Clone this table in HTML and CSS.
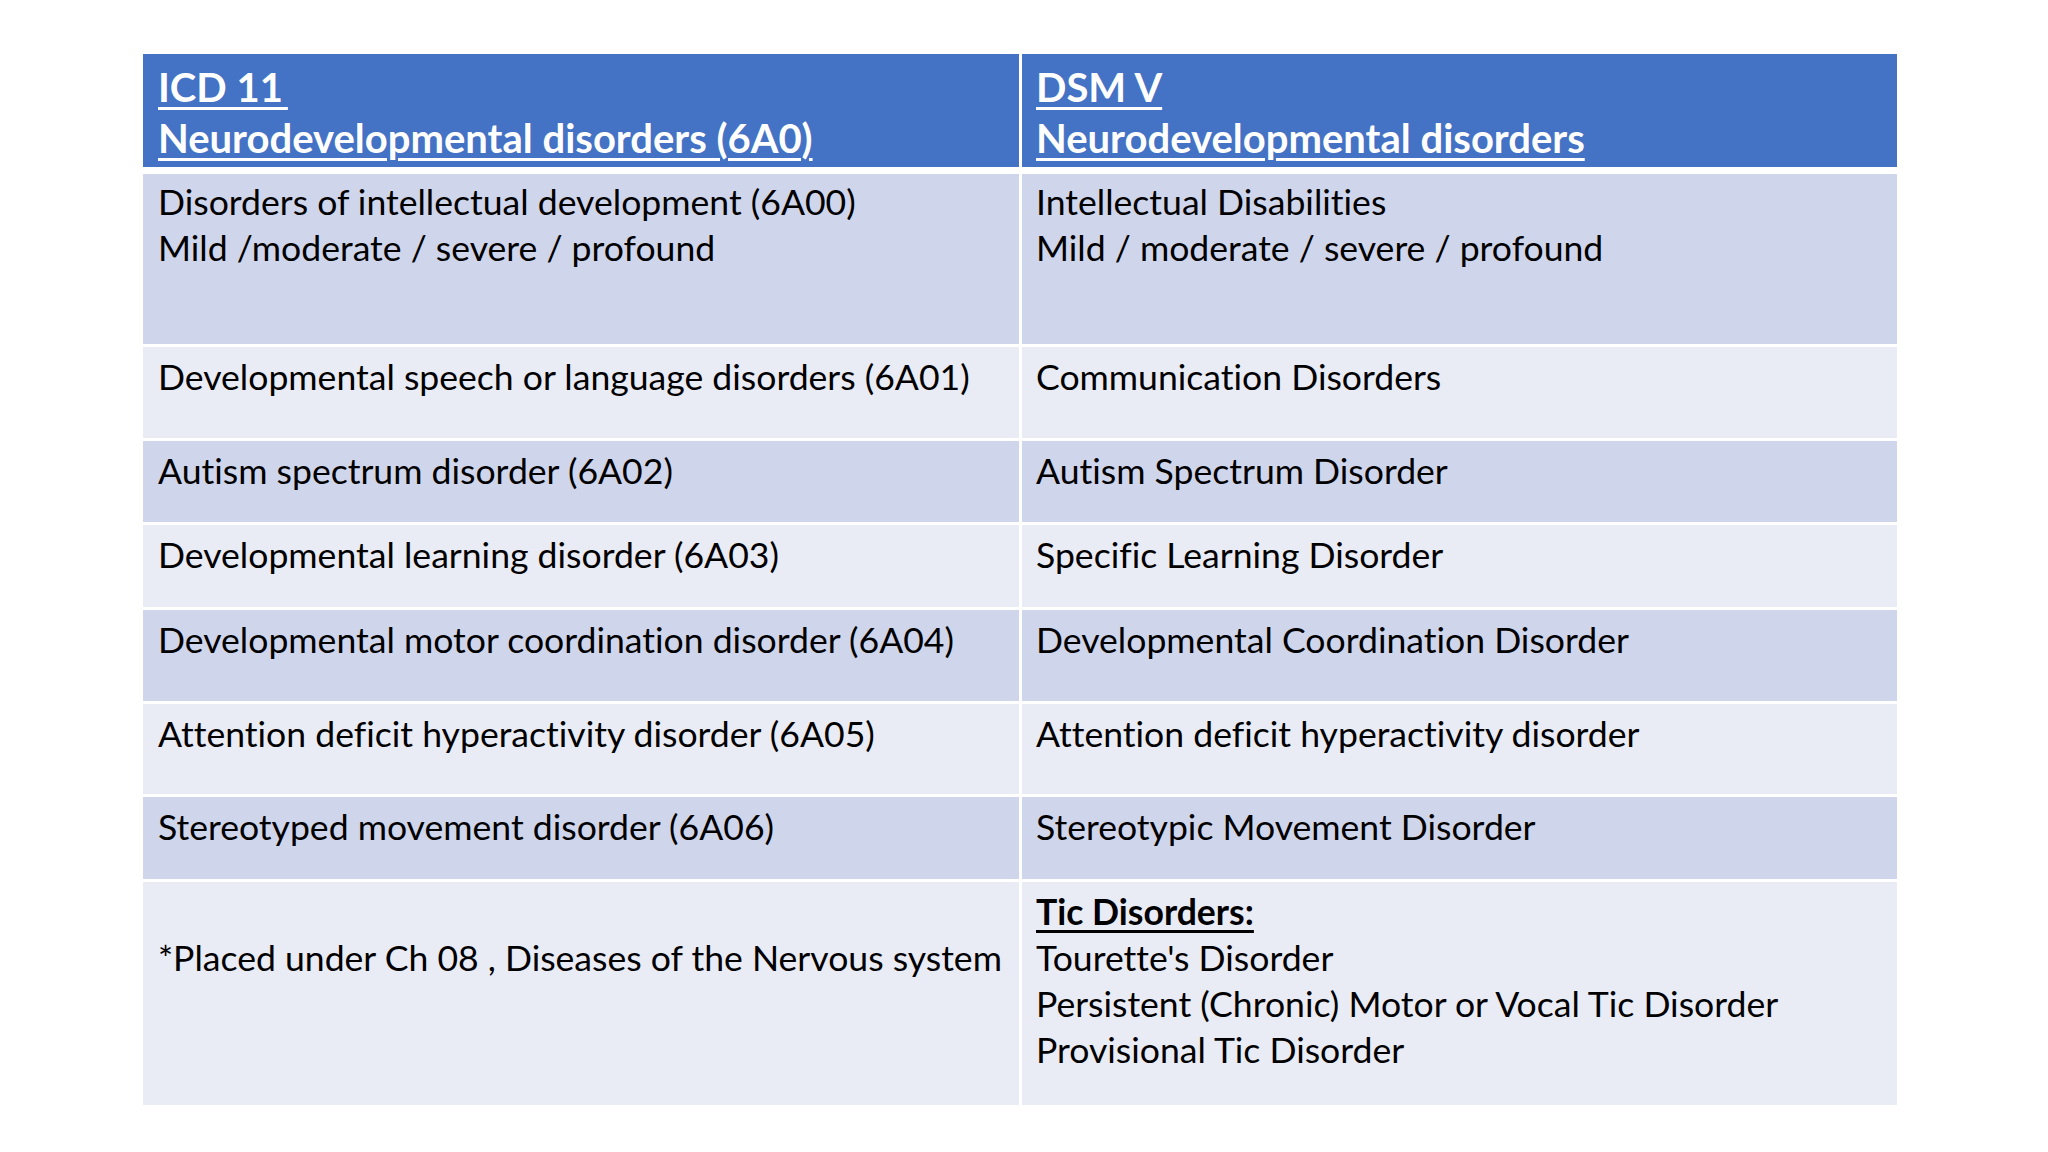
FILE: index.html
```html
<!DOCTYPE html>
<html lang="en">
<head>
<meta charset="utf-8">
<title>ICD 11 vs DSM V</title>
<link rel="stylesheet" href="styles.css">
</head>
<body>
<div class="table">
  <div class="row head">
    <div class="cell"><span class="u">ICD 11&thinsp;</span><br><span class="u">Neurodevelopmental disorders (6A0)</span></div>
    <div class="cell"><span class="u">DSM V</span><br><span class="u">Neurodevelopmental disorders</span></div>
  </div>
  <div class="row odd h170 first">
    <div class="cell">Disorders of intellectual development (6A00)<br>Mild /moderate / severe / profound</div>
    <div class="cell">Intellectual Disabilities<br>Mild / moderate / severe / profound</div>
  </div>
  <div class="row even h91">
    <div class="cell">Developmental speech or language disorders (6A01)</div>
    <div class="cell">Communication Disorders</div>
  </div>
  <div class="row odd h81">
    <div class="cell">Autism spectrum disorder (6A02)</div>
    <div class="cell">Autism Spectrum Disorder</div>
  </div>
  <div class="row even h82">
    <div class="cell">Developmental learning disorder (6A03)</div>
    <div class="cell">Specific Learning Disorder</div>
  </div>
  <div class="row odd h91">
    <div class="cell">Developmental motor coordination disorder (6A04)</div>
    <div class="cell">Developmental Coordination Disorder</div>
  </div>
  <div class="row even h90">
    <div class="cell">Attention deficit hyperactivity disorder (6A05)</div>
    <div class="cell">Attention deficit hyperactivity disorder</div>
  </div>
  <div class="row odd h82">
    <div class="cell">Stereotyped movement disorder (6A06)</div>
    <div class="cell">Stereotypic Movement Disorder</div>
  </div>
  <div class="row even h223">
    <div class="cell second-line">*Placed under Ch 08 , Diseases of the Nervous system</div>
    <div class="cell"><span class="u b">Tic Disorders:</span><br>Tourette's Disorder<br>Persistent (Chronic) Motor or Vocal Tic Disorder<br>Provisional Tic Disorder</div>
  </div>
</div>
</body>
</html>
```

FILE: styles.css
```css
html, body {
  margin: 0;
  padding: 0;
  background: #ffffff;
}

body {
  font-family: "Lato", "Liberation Sans", sans-serif;
  font-variant-ligatures: none;
  color: #000000;
}

.table {
  display: flex;
  flex-direction: column;
  gap: 3px;
  width: 1754px;
  margin: 54px 0 0 143px;
}

.row {
  display: grid;
  grid-template-columns: 876px 875px;
  column-gap: 3px;
}

.cell {
  padding: 7px 10px 0 15px;
  font-size: 35.6px;
  line-height: 46px;
  white-space: nowrap;
}

.cell:nth-child(2) {
  padding-left: 14px;
}

.head {
  height: 113px;
  margin-bottom: 4px;
}

.head .cell {
  padding-top: 8px;
  background: #4472c4;
  color: #ffffff;
  font-weight: 700;
  font-size: 40px;
  line-height: 51px;
}

.first .cell {
  padding-top: 5px;
}

.odd .cell {
  background: #cfd5ea;
}

.even .cell {
  background: #e9ebf5;
}

.u {
  text-decoration: underline;
  text-decoration-thickness: 2.5px;
  text-underline-offset: 5px;
}

.b {
  font-weight: 700;
}

.second-line {
  padding-top: 53px;
}

.h81 { height: 81px; }
.h82 { height: 82px; }
.h90 { height: 90px; }
.h91 { height: 91px; }
.h170 { height: 170px; }
.h223 { height: 223px; }
```
